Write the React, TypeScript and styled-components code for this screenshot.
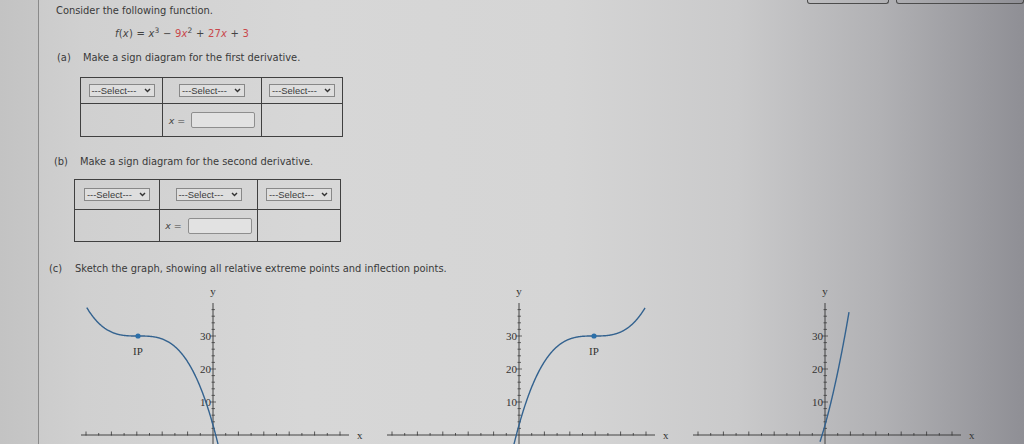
import React from 'react'
import styled, {createGlobalStyle} from 'styled-components'

const GlobalStyle = createGlobalStyle`
  html, body {
    margin: 0;
    padding: 0;
  }
  body {
    width: 1024px;
    height: 444px;
    overflow: hidden;
    background: linear-gradient(to right, #c8c8c8 0%, #d0d0d0 8%, #d7d7d7 30%, #d5d5d5 55%, #cacacb 72%, #b1b1b4 86%, #8f8f95 100%);
  }
`

const Screen = styled.div`
  display: flex;
  height: 444px;
  overflow: hidden;
`
const Gutter = styled.div`
  width: 38px;
  flex: none;
  background: rgba(0, 0, 0, 0.025);
`
const Sheet = styled.div`
  flex: 1;
  display: flex;
  flex-direction: column;
  border-left: 1px solid #8a8a8a;
  padding-left: 17px;
  font-family: "DejaVu Sans", Verdana, sans-serif;
  font-size: 9.9px;
  color: #3a3a3a;
`
const TopBar = styled.div`
  height: 5px;
  display: flex;
  justify-content: flex-end;
  gap: 7px;
`
const TopButton = styled.div<{w: number}>`
  width: ${p => p.w}px;
  height: 3px;
  border: 1px solid #4c4c4c;
  border-top: none;
  border-radius: 0 0 3px 3px;
`
const Line = styled.div<{mt: number; ml?: number}>`
  line-height: 12px;
  height: 12px;
  margin-top: ${p => p.mt}px;
  margin-left: ${p => p.ml || 0}px;
  white-space: nowrap;
`
const Part = styled.span`
  display: inline-block;
  width: 26px;
`
const Formula = styled.div`
  margin-top: 11px;
  margin-left: 59px;
  line-height: 12px;
  height: 12px;
  font-size: 10px;
  letter-spacing: 0.2px;
  white-space: nowrap;
  color: #444;
  i { font-style: italic; }
  sup { font-size: 7.5px; vertical-align: 4px; line-height: 0; }
`
const Red = styled.span`
  color: #c9474b;
`
const SignTable = styled.div<{mt: number; ml: number; cols: string; rows: string}>`
  display: grid;
  grid-template-columns: ${p => p.cols};
  grid-template-rows: ${p => p.rows};
  width: max-content;
  margin-top: ${p => p.mt}px;
  margin-left: ${p => p.ml}px;
  border-top: 1px solid #404040;
  border-left: 1px solid #404040;
`
const Cell = styled.div`
  border-right: 1px solid #404040;
  border-bottom: 1px solid #404040;
  display: flex;
  align-items: center;
  justify-content: center;
  gap: 6px;
`
const SelectBox = styled.div`
  width: 66px;
  height: 13px;
  border: 1px solid #888;
  background: #dedede;
  display: flex;
  align-items: center;
  justify-content: space-between;
  padding: 0 3px 0 2px;
  box-sizing: border-box;
  font-family: "Liberation Sans", Arial, sans-serif;
  font-size: 9.4px;
  color: #3a3a3a;
`
const InputBox = styled.div`
  width: 64px;
  height: 16px;
  border: 1px solid #8e8e8e;
  border-radius: 2px;
  background: #e2e2e2;
  box-sizing: border-box;
`
const Eq = styled.span`
  font-size: 9.5px;
  color: #444;
  i { font-style: italic; }
`
const Graphs = styled.div`
  display: flex;
  gap: 16px;
  margin-top: 7px;
  margin-left: 21px;
`
const Plot = styled.svg`
  flex: none;
  display: block;
  overflow: hidden;
`

function Select() {
    return (
        <SelectBox>
            <span>---Select---</span>
            <svg width="7" height="5" viewBox="0 0 7 5">
                <path d="M1 1 L3.5 3.6 L6 1" fill="none" stroke="#333" strokeWidth="1.4"/>
            </svg>
        </SelectBox>
    )
}

function XEquals() {
    return (
        <Cell>
            <Eq><i>x</i> =</Eq>
            <InputBox/>
        </Cell>
    )
}

type GraphProps = {
    f: (x: number) => number
    from: number
    to: number
    ip?: number
}

const OX = 136, OY = 153, SX = 25, SY = 3.3

function Graph({f, from, to, ip}: GraphProps) {
    const pts: string[] = []
    for (let x = from; x <= to + 1e-9; x += 0.02) {
        pts.push(`${(OX + x * SX).toFixed(2)},${(OY - f(x) * SY).toFixed(2)}`)
    }
    const xticks = []
    for (let k = -10; k <= 10; k++) {
        const px = OX + k * 12.7
        if (px < 6 || px > 270 || k === 0) continue
        xticks.push(<line key={k} x1={px} x2={px} y1={OY - (k % 2 === 0 ? 3.5 : 2)} y2={OY + 0.5} stroke="#333" strokeWidth="0.8"/>)
    }
    const yticks = []
    for (let v = 2; v <= 38; v += 2) {
        const py = OY - v * SY
        const big = v % 10 === 0
        yticks.push(<line key={v} x1={OX - (big ? 3 : 1.5)} x2={OX + (big ? 3 : 2)} y1={py} y2={py} stroke="#333" strokeWidth="0.7"/>)
    }
    return (
        <Plot width="290" height="162" viewBox="0 0 290 162">
            <line x1="4" x2="272" y1={OY} y2={OY} stroke="#333" strokeWidth="0.9"/>
            <line x1={OX} x2={OX} y1="21" y2="162" stroke="#333" strokeWidth="0.9"/>
            {xticks}
            {yticks}
            {[10, 20, 30].map(v => (
                <text key={v} x={OX - 2} y={OY - v * SY + 3.5} textAnchor="end"
                      fontFamily="'Liberation Serif', 'Times New Roman', serif" fontSize="11" fill="#333">{v}</text>
            ))}
            <text x={OX} y="13" textAnchor="middle" fontFamily="'Liberation Serif', serif" fontSize="11" fill="#333">y</text>
            <text x="280" y={OY + 4} fontFamily="'Liberation Serif', serif" fontSize="11" fill="#333">x</text>
            <polyline points={pts.join(' ')} fill="none" stroke="#33628f" strokeWidth="1.4"/>
            {ip !== undefined && (
                <>
                    <circle cx={OX + ip * SX} cy={OY - f(ip) * SY} r="2.6" fill="#2c6fa8"/>
                    <text x={OX + ip * SX} y={OY - f(ip) * SY + 19} textAnchor="middle"
                          fontFamily="'Liberation Serif', serif" fontSize="11" fill="#333">IP</text>
                </>
            )}
        </Plot>
    )
}

export default function App() {
    return (
        <>
            <GlobalStyle/>
            <Screen>
                <Gutter/>
                <Sheet>
                    <TopBar>
                        <TopButton w={80}/>
                        <TopButton w={126}/>
                    </TopBar>
                    <Line mt={0}>Consider the following function.</Line>
                    <Formula>
                        <i>f</i>(<i>x</i>) = <i>x</i><sup>3</sup> − <Red>9<i>x</i></Red><sup>2</sup> + <Red>27<i>x</i></Red> + <Red>3</Red>
                    </Formula>
                    <Line mt={12} ml={1}><Part>(a)</Part>Make a sign diagram for the first derivative.</Line>
                    <SignTable mt={13} ml={24} cols="82px 99px 81px" rows="26px 33px">
                        <Cell><Select/></Cell>
                        <Cell><Select/></Cell>
                        <Cell><Select/></Cell>
                        <Cell/>
                        <XEquals/>
                        <Cell/>
                    </SignTable>
                    <Line mt={19} ml={-2}><Part>(b)</Part>Make a sign diagram for the second derivative.</Line>
                    <SignTable mt={11} ml={18} cols="85px 98px 83px" rows="30px 32px">
                        <Cell><Select/></Cell>
                        <Cell><Select/></Cell>
                        <Cell><Select/></Cell>
                        <Cell/>
                        <XEquals/>
                        <Cell/>
                    </SignTable>
                    <Line mt={21} ml={-7}><Part>(c)</Part>Sketch the graph, showing all relative extreme points and inflection points.</Line>
                    <Graphs>
                        <Graph f={x => -Math.pow(x + 3, 3) + 30} from={-5.05} to={0.4} ip={-3}/>
                        <Graph f={x => Math.pow(x - 3, 3) + 30} from={-0.4} to={5.05} ip={3}/>
                        <Graph f={x => 9 * x * x + 27 * x + 3} from={-0.2} to={0.97}/>
                    </Graphs>
                </Sheet>
            </Screen>
        </>
    )
}
